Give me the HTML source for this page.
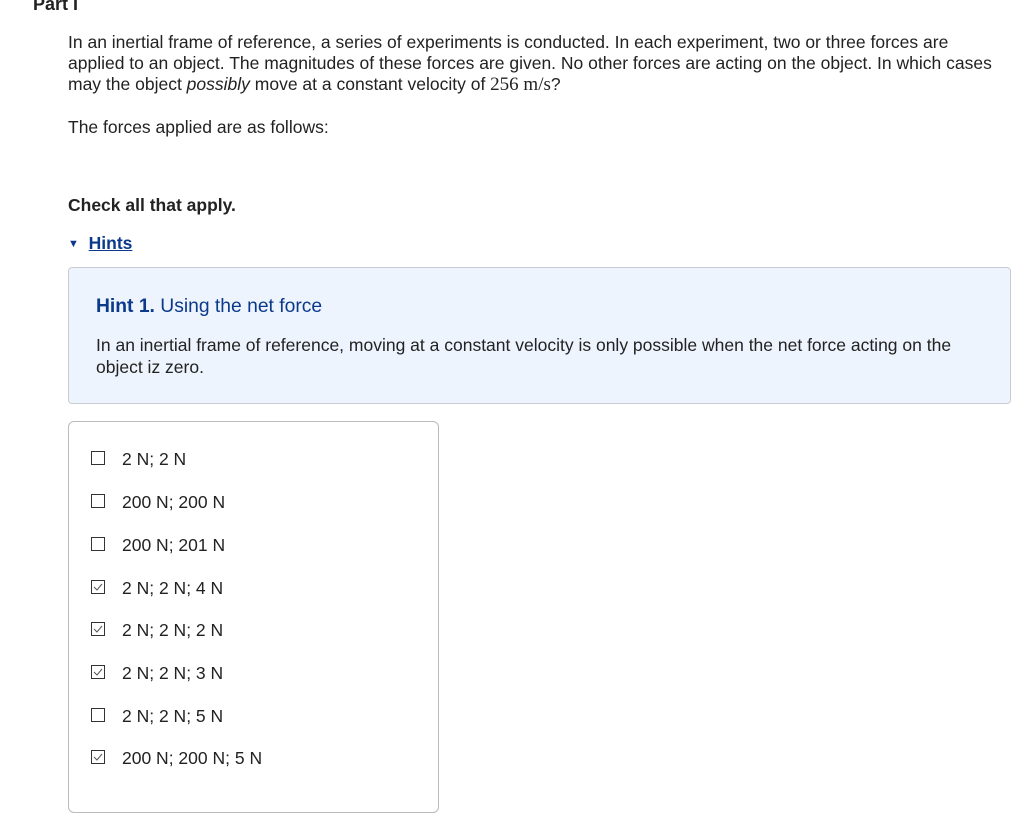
<!DOCTYPE html>
<html><head><style>
body{margin:0;width:1024px;height:795px;background:#fff;font-family:"Liberation Sans",Arial,sans-serif;color:#222;position:relative;overflow:hidden}
.a{position:absolute;white-space:nowrap}
p{margin:0}
.cb{position:absolute;left:91px;width:12px;height:12px;border:1px solid #333;background:#fff}
.cb svg{position:absolute;left:1px;top:1px}
.lab{position:absolute;left:122px;font-size:17.5px;line-height:20px}
</style></head><body>
<div class="a" style="left:33px;top:-6px;font-size:18px;font-weight:bold;line-height:20px">Part I</div>
<div class="a" style="left:68px;top:32px;font-size:17.5px;line-height:21px">
<p>In an inertial frame of reference, a series of experiments is conducted. In each experiment, two or three forces are</p>
<p>applied to an object. The magnitudes of these forces are given. No other forces are acting on the object. In which cases</p>
<p>may the object <i>possibly</i> move at a constant velocity of <span style="font-family:'Liberation Serif',serif;font-size:19px">256 m/s</span>?</p>
</div>
<div class="a" style="left:68px;top:117px;font-size:17.5px;line-height:20px">The forces applied are as follows:</div>
<div class="a" style="left:68px;top:195px;font-size:17.5px;font-weight:bold;line-height:20px">Check all that apply.</div>
<div class="a" style="left:68px;top:233px;font-size:17.5px;line-height:20px;color:#0b3a8c"><span style="font-size:11px;position:relative;top:-2px">&#9660;</span>&nbsp;&nbsp;<b style="text-decoration:underline">Hints</b></div>
<div style="position:absolute;left:68px;top:267px;width:941px;height:135px;background:#eef4fd;border:1px solid #c8ccd2;border-radius:4px"></div>
<div class="a" style="left:96px;top:296px;font-size:19.3px;line-height:22px;color:#0b3a8c"><b>Hint 1.</b> Using the net force</div>
<div class="a" style="left:96px;top:334px;font-size:17.5px;line-height:22px">
<p>In an inertial frame of reference, moving at a constant velocity is only possible when the net force acting on the</p>
<p>object iz zero.</p></div>
<div style="position:absolute;left:68px;top:421px;width:369px;height:390px;border:1px solid #bbb;border-radius:6px"></div>
<div class="cb" style="top:451px"></div><div class="lab" style="top:449px">2 N; 2 N</div>
<div class="cb" style="top:494px"></div><div class="lab" style="top:492px">200 N; 200 N</div>
<div class="cb" style="top:537px"></div><div class="lab" style="top:535px">200 N; 201 N</div>
<div class="cb" style="top:580px"><svg width="10" height="10"><path d="M1 5 L4 8 L9 2" stroke="#555" fill="none" stroke-width="1"/></svg></div><div class="lab" style="top:578px">2 N; 2 N; 4 N</div>
<div class="cb" style="top:622px"><svg width="10" height="10"><path d="M1 5 L4 8 L9 2" stroke="#555" fill="none" stroke-width="1"/></svg></div><div class="lab" style="top:620px">2 N; 2 N; 2 N</div>
<div class="cb" style="top:665px"><svg width="10" height="10"><path d="M1 5 L4 8 L9 2" stroke="#555" fill="none" stroke-width="1"/></svg></div><div class="lab" style="top:663px">2 N; 2 N; 3 N</div>
<div class="cb" style="top:708px"></div><div class="lab" style="top:706px">2 N; 2 N; 5 N</div>
<div class="cb" style="top:750px"><svg width="10" height="10"><path d="M1 5 L4 8 L9 2" stroke="#555" fill="none" stroke-width="1"/></svg></div><div class="lab" style="top:748px">200 N; 200 N; 5 N</div>
</body></html>
